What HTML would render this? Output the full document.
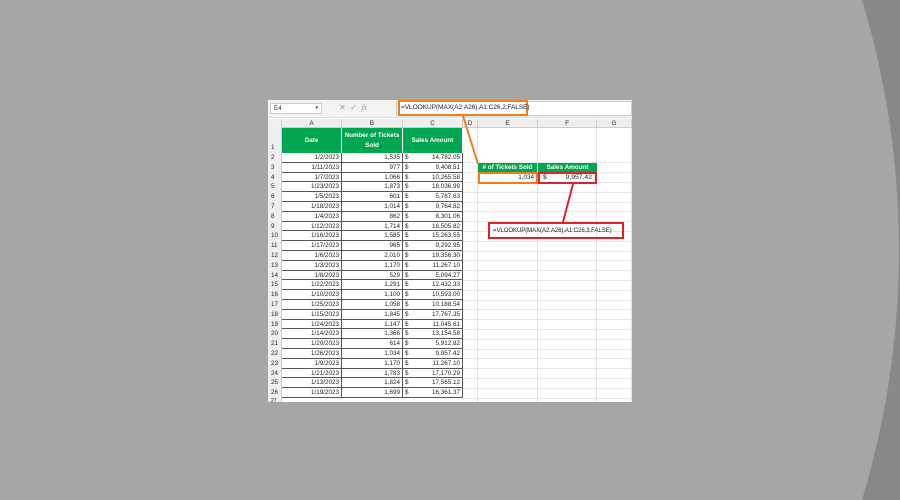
<!DOCTYPE html><html><head><style>
html,body{margin:0;width:900px;height:500px;overflow:hidden}
body{background:#888;font-family:"Liberation Sans",sans-serif;position:relative}
.a{position:absolute;box-sizing:border-box}
.t{font-size:6.3px;color:#222;white-space:nowrap}
</style></head><body>
<svg class="a" style="left:0;top:0" width="900" height="500"><circle cx="36" cy="250" r="863" fill="#a6a6a6"/></svg>
<div class="a" style="left:268px;top:100px;width:364px;height:302px;background:#fff;overflow:hidden">
<div class="a" style="left:0;top:0;width:364px;height:18px;background:#f3f3f3;border-bottom:1px solid #ddd"></div>
<div class="a t" style="left:2px;top:3px;width:52px;height:11px;background:#fff;border:1px solid #ccc;padding:1px 3px">E4<span style="float:right;font-size:5px">▾</span></div>
<div class="a t" style="left:71px;top:3px;color:#999;font-size:8px">✕ &nbsp;✓ &nbsp;<i style="font-family:'Liberation Serif'">fx</i></div>
<div class="a" style="left:128px;top:1px;width:236px;height:15px;background:#fff;border:1px solid #ccc"></div>
<div class="a t" style="left:130px;top:0;width:130px;height:16px;border:2px solid #f07c1e;padding:2px 1px;font-size:6.6px;letter-spacing:-0.1px">=VLOOKUP(MAX(A2:A26),A1:C26,2,FALSE)</div>
<div class="a" style="left:0;top:19px;width:364px;height:9px;background:#efefef;border-bottom:1px solid #ccc"></div>
<div class="a" style="left:0;top:19px;width:14px;height:283px;background:#efefef;border-right:1px solid #ccc"></div>
<div id="g"></div>
</div>
<script>
var s='',cols=[['A',14,60],['B',74,61],['C',135,60],['D',195,15],['E',210,60],['F',270,59],['G',329,35]];
cols.forEach(function(c){s+='<div class="a t" style="left:'+c[1]+'px;top:19px;width:'+c[2]+'px;height:9px;text-align:center;line-height:9px;border-right:1px solid #ccc">'+c[0]+'</div>';
if(c[0]>'C')s+='<div class="a" style="left:'+(c[1]+c[2]-1)+'px;top:28px;width:1px;height:274px;background:#e2e2e2"></div>';});
var d=[["1/2/2023","1,535","14,782.05"],["1/11/2023","977","9,408.51"],["1/7/2023","1,066","10,265.58"],["1/23/2023","1,873","18,036.99"],["1/5/2023","601","5,787.63"],["1/18/2023","1,014","9,764.82"],["1/4/2023","862","8,301.06"],["1/12/2023","1,714","16,505.82"],["1/16/2023","1,585","15,263.55"],["1/17/2023","965","9,292.95"],["1/6/2023","2,010","19,356.30"],["1/3/2023","1,170","11,267.10"],["1/8/2023","529","5,094.27"],["1/22/2023","1,291","12,432.33"],["1/10/2023","1,100","10,593.00"],["1/25/2023","1,058","10,188.54"],["1/15/2023","1,845","17,767.35"],["1/24/2023","1,147","11,045.61"],["1/14/2023","1,366","13,154.58"],["1/20/2023","614","5,912.82"],["1/26/2023","1,034","9,957.42"],["1/9/2023","1,170","11,267.10"],["1/21/2023","1,783","17,170.29"],["1/13/2023","1,824","17,565.12"],["1/19/2023","1,699","16,361.37"]];
s+='<div class="a t" style="left:0;top:28px;width:14px;height:25px;padding:16px 0 0 3px">1</div>';
s+='<div class="a" style="left:14px;top:28px;width:181px;height:25px;background:#00a550"></div>';
[['Date',14,60],['Number of Tickets<br>Sold',74,61],['Sales Amount',135,60]].forEach(function(c){s+='<div class="a t" style="left:'+c[1]+'px;top:28px;width:'+c[2]+'px;height:25px;display:flex;align-items:center;justify-content:center;text-align:center;color:#fff;font-weight:bold;line-height:10px;border-right:1px solid #fff">'+c[0]+'</div>';});
d.forEach(function(r,i){var y=53+i*9.8;
s+='<div class="a t" style="left:0;top:'+y+'px;width:14px;height:9.8px;line-height:9.8px;padding-left:3px">'+(i+2)+'</div>';
s+='<div class="a" style="left:14px;top:'+y+'px;width:181px;height:9.8px;border-bottom:1px solid #555"></div>';
s+='<div class="a t" style="left:14px;top:'+y+'px;width:60px;height:9.8px;line-height:9.8px;text-align:right;padding-right:2px;border-right:1px solid #555">'+r[0]+'</div>';
s+='<div class="a t" style="left:74px;top:'+y+'px;width:61px;height:9.8px;line-height:9.8px;text-align:right;padding-right:2px;border-right:1px solid #555">'+r[1]+'</div>';
s+='<div class="a t" style="left:135px;top:'+y+'px;width:60px;height:9.8px;line-height:9.8px;text-align:right;padding:0 2px;border-right:1px solid #555"><span style="float:left">$</span>'+r[2]+'</div>';
s+='<div class="a" style="left:195px;top:'+(y+9.3)+'px;width:169px;height:1px;background:#e6e6e6"></div>';});
s+='<div class="a t" style="left:0;top:298px;width:14px;font-size:5px;padding-left:3px">27</div>';
s+='<div class="a t" style="left:210px;top:63px;width:119px;height:9px;background:#00a550;color:#fff;font-weight:bold;line-height:9px"><span style="display:inline-block;width:59px;text-align:center;border-right:1px solid #fff">#&nbsp;of Tickets Sold</span><span style="display:inline-block;width:59px;text-align:center">Sales Amount</span></div>';
s+='<div class="a t" style="left:210px;top:72px;width:60px;height:12px;border:2px solid #f07c1e;text-align:right;padding-right:2px;line-height:8px">1,034</div>';
s+='<div class="a t" style="left:270px;top:72px;width:59px;height:12px;border:2px solid #e2202a;text-align:right;padding:0 3px;line-height:8px;font-size:6.8px"><span style="float:left">$</span>9,957.42</div>';
s+='<div class="a t" style="left:220px;top:122px;width:136px;height:17px;border:2px solid #e2202a;line-height:13px;padding-left:3px;font-size:6.1px;letter-spacing:-0.1px">=VLOOKUP(MAX(A2:A26),A1:C26,3,FALSE)</div>';
s+='<svg class="a" style="left:0;top:0" width="364" height="302"><line x1="195" y1="16" x2="210" y2="64" stroke="#f07c1e" stroke-width="2"/><line x1="305" y1="84" x2="295" y2="122" stroke="#e2202a" stroke-width="2"/></svg>';
document.getElementById('g').outerHTML=s;
</script>
</body></html>
